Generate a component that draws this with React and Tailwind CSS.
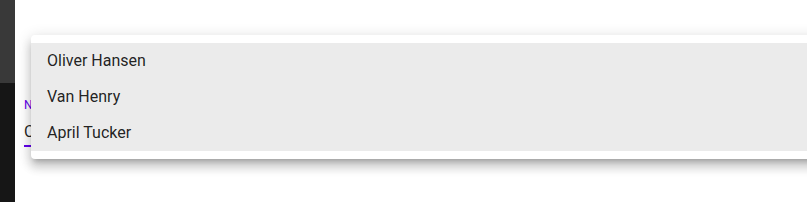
import React from "react";

export default function App() {
  const names = ["Oliver Hansen", "Van Henry", "April Tucker"];
  return (
    <div
      className="relative w-[807px] h-[202px] overflow-hidden bg-white flex"
      style={{ fontFamily: "Roboto, 'Liberation Sans', sans-serif" }}
    >
      <div className="w-[15px] h-full flex flex-col shrink-0">
        <div className="h-[83px] bg-[#393939]" />
        <div className="flex-1 bg-[#161616]" />
      </div>
      <div className="flex-1 pl-[9px] pt-[99px]">
        <div className="w-[300px] flex flex-col">
          <div className="text-[12px] leading-[12px] text-[#6200ee]">Name</div>
          <div className="mt-[11px] text-[16px] leading-[19px] text-[rgba(0,0,0,0.87)] pb-[4px] border-b-2 border-[#6200ee]">
            Carlos Abbott
          </div>
        </div>
      </div>
      <div className="absolute left-[31px] top-[35px] w-[900px] bg-white rounded-[4px] py-2 shadow-[0px_5px_5px_-3px_rgba(0,0,0,0.2),0px_8px_10px_1px_rgba(0,0,0,0.14),0px_3px_14px_2px_rgba(0,0,0,0.12)]">
        {names.map((n) => (
          <div
            key={n}
            className="h-9 flex items-center pl-4 bg-[#ebebeb] text-[16px] text-[rgba(0,0,0,0.87)]"
          >
            {n}
          </div>
        ))}
      </div>
    </div>
  );
}
